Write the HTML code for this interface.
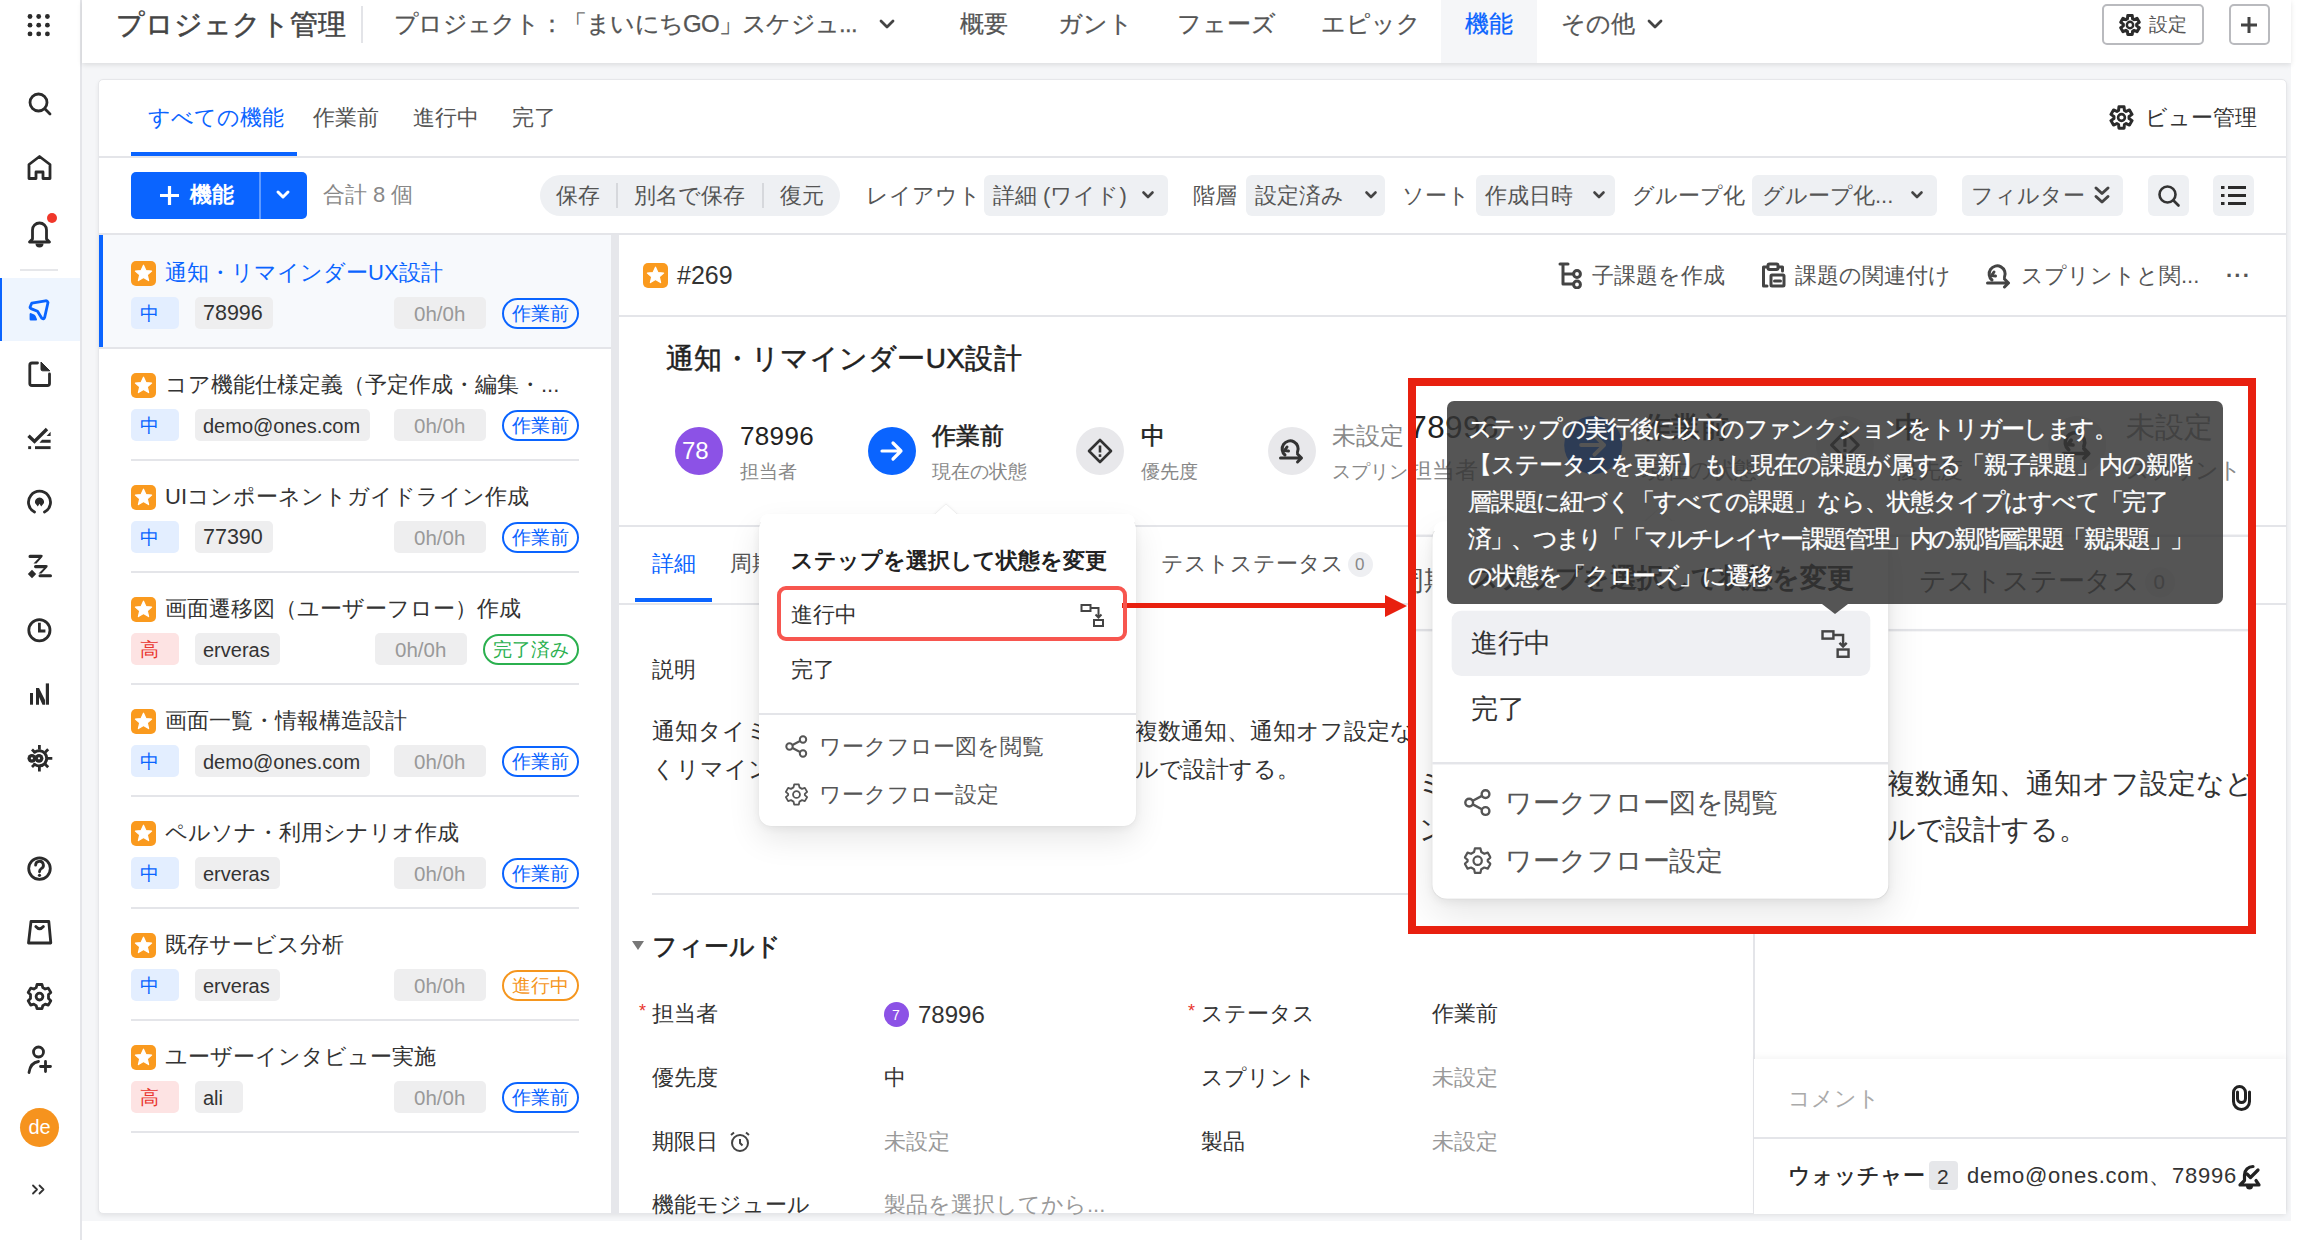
<!DOCTYPE html>
<html lang="ja">
<head>
<meta charset="utf-8">
<style>
*{box-sizing:border-box;margin:0;padding:0}
html,body{width:2304px;height:1240px;overflow:hidden;background:#fff}
body{position:relative;font-family:"Liberation Sans",sans-serif;color:#333;}
.a{position:absolute}
.t{position:absolute;white-space:nowrap;line-height:1}
svg{display:block}
#side{left:0;top:0;width:82px;height:1240px;background:#fff;border-right:2px solid #e4e5e9}
#top{left:82px;top:0;width:2209px;height:63px;background:#fff;box-shadow:0 2px 5px rgba(0,0,0,.10);z-index:2}
#bg{left:82px;top:63px;width:2209px;height:1158px;background:#f5f6f8}
#card{left:98px;top:79px;width:2189px;height:1135px;background:#fff;border:1px solid #e6e7ea;border-radius:5px;box-shadow:0 2px 4px rgba(0,0,0,.07)}
.ico{position:absolute;left:27px;width:25px;height:25px}
.gray{color:#888}
.pill{position:absolute;background:#eef0f3;border-radius:6px;height:41px}
.m{-webkit-text-stroke:0.45px currentColor}
</style>
</head>
<body>
<!-- SIDEBAR -->
<div id="side" class="a"></div>
<div class="a" style="left:0;top:278px;width:80px;height:63px;background:#eef5fe"></div>
<div class="a" style="left:0;top:278px;width:2px;height:63px;background:#0a64ff"></div>
<div class="a" style="left:47px;top:213px;width:10px;height:10px;border-radius:50%;background:#f0372a"></div>
<div class="a" style="left:20px;top:269px;width:38px;height:2px;background:#e6e7ea"></div>
<div class="a" style="left:20px;top:1108px;width:39px;height:39px;border-radius:50%;background:#f6931e;color:#fff;font-size:20px;line-height:39px;text-align:center">de</div>
<svg class="a" style="left:0;top:0" width="82" height="1240" viewBox="0 0 82 1240">
 <g fill="#2b2b2b">
  <circle cx="30" cy="16.5" r="2.4"/><circle cx="38.7" cy="16.5" r="2.4"/><circle cx="47.4" cy="16.5" r="2.4"/>
  <circle cx="30" cy="25.2" r="2.4"/><circle cx="38.7" cy="25.2" r="2.4"/><circle cx="47.4" cy="25.2" r="2.4"/>
  <circle cx="30" cy="33.9" r="2.4"/><circle cx="38.7" cy="33.9" r="2.4"/><circle cx="47.4" cy="33.9" r="2.4"/>
 </g>
 <g fill="none" stroke="#2b2b2b" stroke-width="2.8" stroke-linecap="round" stroke-linejoin="round">
  <!-- search -->
  <circle cx="38.5" cy="102.5" r="8.5"/><path d="M44.8 108.8 L50 114"/>
  <!-- home -->
  <path d="M29 164.5 L39.5 156.5 L50 164.5 V178.5 H43 V172 H36 V178.5 H29 Z"/>
  <!-- bell -->
  <path d="M32.5 239 V230 A7 7 0 0 1 46.5 230 V239 L49.5 242 H29.5 Z"/>
  <!-- doc -->
  <path d="M37.5 363 H32 Q29.8 363 29.8 365.2 V383.5 Q29.8 385.5 32 385.5 H47.5 Q49.5 385.5 49.5 383.5 V374"/>
  <!-- clock -->
  <circle cx="39.4" cy="630.2" r="10.6"/>
  <!-- help -->
  <circle cx="39.5" cy="868.6" r="10.8"/>
  <path d="M35.6 865.2 A3.9 3.9 0 1 1 41 868.8 Q39.5 869.8 39.5 871.8"/>
  <!-- bag -->
  <path d="M31 921.5 H48.8 L50.8 943 H28.5 Z"/>
  <path d="M35.8 926.5 Q39.6 931 43.4 926.5"/>
  <!-- gear -->
  <path d="M37 984.5 H42 L42.8 987.6 L45.2 989 L48.3 988.1 L50.8 992.4 L48.5 994.6 V998.6 L50.8 1000.8 L48.3 1005.1 L45.2 1004.2 L42.8 1005.6 L42 1008.7 H37 L36.2 1005.6 L33.8 1004.2 L30.7 1005.1 L28.2 1000.8 L30.5 998.6 V994.6 L28.2 992.4 L30.7 988.1 L33.8 989 L36.2 987.6 Z"/>
  <circle cx="39.5" cy="996.6" r="3.4"/>
  <!-- user+ -->
  <circle cx="38.5" cy="1052" r="5"/>
  <path d="M29 1072.5 Q30.5 1062.5 38.5 1061.5"/>
  <path d="M45.5 1061.5 V1071.5 M40.5 1066.5 H50.5"/>
  <!-- circle icon -->
  <path d="M34.5 512 A11 11 0 1 1 44.5 512"/>
  <!-- bug -->
  <path d="M34.6 752.2 A7.6 7.6 0 1 1 34.6 764.4" stroke-width="3"/>
  <path d="M39.4 745 V749.5 M39.4 767 V771.5 M47.5 758.3 H52.3 M45.2 752.3 L48.2 749.3 M45.2 764.3 L48.2 767.3 M32 749.5 L35 752.5 M32 767 L35 764" stroke-width="2.8" stroke-linecap="butt"/>
 </g>
 <g fill="#2b2b2b"><circle cx="31.9" cy="758.3" r="4.4"/><circle cx="39" cy="758.3" r="4.4"/></g><g fill="#fff"><circle cx="31.9" cy="758.3" r="1.1"/><circle cx="39" cy="758.3" r="1.1"/></g>
 <!-- bell clapper -->
 <path d="M35.5 243.5 A4 4 0 0 0 43.5 243.5 Z" fill="#2b2b2b"/>
 <!-- doc corner -->
 <path d="M41 362 L49.8 370.8 H42.5 Q41 370.8 41 369.3 Z" fill="#2b2b2b" stroke="#2b2b2b" stroke-width="1" stroke-linejoin="round"/>
 <!-- active icon -->
 <g fill="none" stroke="#0a64ff" stroke-width="2.8" stroke-linejoin="round">
  <path d="M31.8 303.2 L45.5 300.8 Q47.3 300.5 48 302.5 L44.6 317.6 Q43.8 319.8 41.8 318.2 L37.5 311.3 L31 308.6 Q29.6 307.8 30.3 306.4 Z"/>
 </g>
 <path d="M29.6 314.2 Q29.8 312.8 31.2 313.2 L34.2 314.5 Q35.2 315 35.6 316 L37 319.3 Q37.2 320.5 36 320.5 H30.8 Q29.6 320.5 29.6 319.3 Z" fill="#0a64ff"/>
 <!-- checklist -->
 <g fill="none" stroke="#2b2b2b" stroke-width="3.4" stroke-linejoin="miter">
  <path d="M28.5 435.8 L34.5 441.5 L47 429"/>
 </g>
 <g fill="#2b2b2b">
  <path d="M46.6 436 L50.6 431.8 V436 Z"/>
  <path d="M42 439.8 H50.6 V442.8 H39.5 Z"/>
  <rect x="28.2" y="446.2" width="2.9" height="2.9"/>
  <rect x="35" y="446.2" width="15.6" height="2.9"/>
  <!-- circle inner blob -->
  <path d="M35 503 A4.6 4.6 0 1 1 44 503 L41.2 506.5 L39.5 503.8 L37.8 506.5 Z"/>
  <!-- z icon -->
  <path d="M30 554.8 H41 Q43.5 554.8 42.3 557 L36.5 563.5 H33.5 L38.8 558 H30 Q28.5 558 28.5 556.4 Q28.5 554.8 30 554.8 Z"/>
  <path d="M35.5 565 H46 Q48.5 565 47.3 567.2 L41.5 573.5 H38.5 L43.8 568.2 H35.5 Q34 568.2 34 566.6 Q34 565 35.5 565 Z"/>
  <rect x="38.5" y="574.2" width="13.5" height="3" rx="1.5"/>
  <path d="M32 569.8 L36.2 574 L32 578.2 L27.8 574 Z"/>
  <!-- clock hand -->
  <path d="M38 622.8 H40.8 V629.6 H45.4 V632.4 H38 Z"/>
  <!-- chart -->
  <rect x="30" y="693" width="3" height="11.7"/>
  <path d="M36 688 H39 L45 700 V704.7 H42.5 L39 697 V704.7 H36 Z"/>
  <rect x="45.8" y="683.4" width="3.2" height="21.3"/>
  <!-- help dot -->
  <circle cx="39.5" cy="875.3" r="1.6"/>
 </g>
 <!-- >> -->
 <g fill="none" stroke="#333" stroke-width="1.8" stroke-linecap="round" stroke-linejoin="round">
  <path d="M33 1185.5 L37 1189.5 L33 1193.5 M39.5 1185.5 L43.5 1189.5 L39.5 1193.5"/>
 </g>
</svg>
<!-- TOP BAR -->
<div id="top" class="a">
</div>

<div id="bg" class="a"></div>
<div id="card" class="a"></div>


<!-- TOP BAR CONTENT -->
<div class="a" style="left:1441px;top:0;width:96px;height:63px;background:#f5f6f8;z-index:3"></div>
<div class="t" style="left:116px;top:11px;font-size:28px;color:#444;z-index:3;-webkit-text-stroke:0.5px #444">プロジェクト管理</div>
<div class="a" style="left:361px;top:6px;width:2px;height:37px;background:#e3e4e8;z-index:3"></div>
<div class="t" style="left:394px;top:12px;font-size:24px;color:#555;z-index:3;-webkit-text-stroke:0.25px #555;letter-spacing:-0.75px">プロジェクト：「まいにちGO」スケジュ...</div>
<svg class="a" style="left:878px;top:18px;z-index:3" width="18" height="12" viewBox="0 0 18 12" fill="none" stroke="#444" stroke-width="2.8" stroke-linecap="round" stroke-linejoin="round"><path d="M3 3 L9 9 L15 3"/></svg>
<div class="t" style="left:960px;top:12px;font-size:24px;color:#555;z-index:3;-webkit-text-stroke:0.25px #555">概要</div>
<div class="t" style="left:1058px;top:12px;font-size:24px;color:#555;z-index:3;-webkit-text-stroke:0.25px #555">ガント</div>
<div class="t" style="left:1177px;top:12px;font-size:24px;color:#555;z-index:3;-webkit-text-stroke:0.25px #555">フェーズ</div>
<div class="t" style="left:1321px;top:12px;font-size:24px;color:#555;z-index:3;-webkit-text-stroke:0.25px #555">エピック</div>
<div class="t" style="left:1465px;top:12px;font-size:24px;color:#0a64ff;z-index:3;-webkit-text-stroke:0.25px #0a64ff">機能</div>
<div class="t" style="left:1561px;top:12px;font-size:24px;color:#555;z-index:3;-webkit-text-stroke:0.25px #555">その他</div>
<svg class="a" style="left:1646px;top:18px;z-index:3" width="18" height="12" viewBox="0 0 18 12" fill="none" stroke="#444" stroke-width="2.8" stroke-linecap="round" stroke-linejoin="round"><path d="M3 3 L9 9 L15 3"/></svg>
<div class="a" style="left:2102px;top:4px;width:102px;height:41px;border:2px solid #b9babe;border-radius:5px;background:#fff;z-index:3"></div>
<svg class="a" style="left:2119px;top:14px;z-index:3" width="22" height="22" viewBox="0 0 25 25"><g fill="none" stroke="#2b2b2b" stroke-width="3.4" stroke-linejoin="round"><path d="M9.59 5.48 L9.93 1.80 L15.07 1.80 L15.41 5.48 L17.13 6.47 L20.48 4.93 L23.05 9.38 L20.03 11.51 L20.03 13.49 L23.05 15.62 L20.48 20.07 L17.13 18.53 L15.41 19.52 L15.07 23.20 L9.93 23.20 L9.59 19.52 L7.87 18.53 L4.52 20.07 L1.95 15.62 L4.97 13.49 L4.97 11.51 L1.95 9.38 L4.52 4.93 L7.87 6.47 Z"/><circle cx="12.5" cy="12.5" r="3.6" stroke-width="2.8"/></g></svg>
<div class="t" style="left:2149px;top:15px;font-size:19px;color:#555;z-index:3">設定</div>
<div class="a" style="left:2229px;top:4px;width:41px;height:41px;border:2px solid #b9babe;border-radius:5px;background:#fff;z-index:3"></div>
<svg class="a" style="left:2240px;top:16px;z-index:3" width="18" height="18" viewBox="0 0 18 18" stroke="#444" stroke-width="3"><path d="M9 1 V17 M1 9 H17"/></svg>

<!-- CARD: TABS -->
<div class="t" style="left:148px;top:107.0px;font-size:22px;color:#0a64ff;">すべての機能</div>
<div class="t" style="left:313px;top:107.0px;font-size:22px;color:#555;">作業前</div>
<div class="t" style="left:413px;top:107.0px;font-size:22px;color:#555;">進行中</div>
<div class="t" style="left:512px;top:107.0px;font-size:22px;color:#555;">完了</div>
<div class="a" style="left:131px;top:152px;width:166px;height:4px;background:#0a64ff"></div>
<div class="a" style="left:99px;top:156px;width:2187px;height:1.5px;background:#e4e5e9"></div>
<svg class="a" style="left:2109px;top:105px;z-index:3" width="25" height="25" viewBox="0 0 25 25"><g fill="none" stroke="#2b2b2b" stroke-width="3.0" stroke-linejoin="round"><path d="M9.59 5.48 L9.93 1.80 L15.07 1.80 L15.41 5.48 L17.13 6.47 L20.48 4.93 L23.05 9.38 L20.03 11.51 L20.03 13.49 L23.05 15.62 L20.48 20.07 L17.13 18.53 L15.41 19.52 L15.07 23.20 L9.93 23.20 L9.59 19.52 L7.87 18.53 L4.52 20.07 L1.95 15.62 L4.97 13.49 L4.97 11.51 L1.95 9.38 L4.52 4.93 L7.87 6.47 Z"/><circle cx="12.5" cy="12.5" r="3.4" stroke-width="2.6"/></g></svg>
<div class="t" style="left:2145px;top:107.0px;font-size:22px;color:#333;">ビュー管理</div>

<!-- TOOLBAR -->
<div class="a" style="left:131px;top:172px;width:176px;height:47px;background:#0a64ff;border-radius:5px"></div>
<div class="a" style="left:259px;top:172px;width:1.5px;height:47px;background:rgba(255,255,255,.35)"></div>
<svg class="a" style="left:159px;top:185px" width="21" height="21" viewBox="0 0 21 21" stroke="#fff" stroke-width="3.2"><path d="M10.5 1 V20 M1 10.5 H20"/></svg>
<div class="t" style="left:190px;top:184.0px;font-size:22px;color:#fff;font-weight:bold">機能</div>
<svg class="a" style="left:275px;top:189px" width="16" height="12" viewBox="0 0 16 12" fill="none" stroke="#fff" stroke-width="3" stroke-linecap="round" stroke-linejoin="round"><path d="M3 3 L8 8 L13 3"/></svg>
<div class="t" style="left:323px;top:184.0px;font-size:22px;color:#888;">合計 8 個</div>
<div class="a" style="left:540px;top:175px;width:300px;height:41px;background:#eef0f3;border-radius:21px"></div>
<div class="a" style="left:616px;top:183px;width:1.5px;height:25px;background:#d6d8dc"></div>
<div class="a" style="left:762px;top:183px;width:1.5px;height:25px;background:#d6d8dc"></div>
<div class="t" style="left:556px;top:184.5px;font-size:22px;color:#555;">保存</div>
<div class="t" style="left:634px;top:184.5px;font-size:22px;color:#555;">別名で保存</div>
<div class="t" style="left:780px;top:184.5px;font-size:22px;color:#555;">復元</div>
<div class="t" style="left:866px;top:184.5px;font-size:22px;color:#555;">レイアウト</div>
<div class="pill" style="left:984px;top:175px;width:184px"></div>
<div class="t" style="left:993px;top:184.5px;font-size:22px;color:#555;">詳細 (ワイド)</div>
<svg class="a" style="left:1141px;top:190px" width="14" height="10" viewBox="0 0 14 10" fill="none" stroke="#444" stroke-width="2.6" stroke-linecap="round" stroke-linejoin="round"><path d="M2.5 2.5 L7 7 L11.5 2.5"/></svg>
<div class="t" style="left:1193px;top:184.5px;font-size:22px;color:#555;">階層</div>
<div class="pill" style="left:1246px;top:175px;width:139px"></div>
<div class="t" style="left:1255px;top:184.5px;font-size:22px;color:#555;">設定済み</div>
<svg class="a" style="left:1364px;top:190px" width="14" height="10" viewBox="0 0 14 10" fill="none" stroke="#444" stroke-width="2.6" stroke-linecap="round" stroke-linejoin="round"><path d="M2.5 2.5 L7 7 L11.5 2.5"/></svg>
<div class="t" style="left:1402px;top:184.5px;font-size:22px;color:#555;">ソート</div>
<div class="pill" style="left:1476px;top:175px;width:139px"></div>
<div class="t" style="left:1485px;top:184.5px;font-size:22px;color:#555;">作成日時</div>
<svg class="a" style="left:1592px;top:190px" width="14" height="10" viewBox="0 0 14 10" fill="none" stroke="#444" stroke-width="2.6" stroke-linecap="round" stroke-linejoin="round"><path d="M2.5 2.5 L7 7 L11.5 2.5"/></svg>
<div class="t" style="left:1632px;top:184.5px;font-size:22px;color:#555;">グループ化</div>
<div class="pill" style="left:1752px;top:175px;width:185px"></div>
<div class="t" style="left:1762px;top:184.5px;font-size:22px;color:#555;">グループ化...</div>
<svg class="a" style="left:1910px;top:190px" width="14" height="10" viewBox="0 0 14 10" fill="none" stroke="#444" stroke-width="2.6" stroke-linecap="round" stroke-linejoin="round"><path d="M2.5 2.5 L7 7 L11.5 2.5"/></svg>
<div class="pill" style="left:1962px;top:175px;width:161px"></div>
<div class="t" style="left:1971px;top:184.5px;font-size:22px;color:#555;">フィルター</div>
<svg class="a" style="left:2093px;top:185px" width="18" height="21" viewBox="0 0 18 21" fill="none" stroke="#444" stroke-width="3" stroke-linecap="round" stroke-linejoin="round"><path d="M3 3 L9 8.5 L15 3 M3 11.5 L9 17 L15 11.5"/></svg>
<div class="pill" style="left:2148px;top:175px;width:41px"></div>
<svg class="a" style="left:2157px;top:184px" width="24" height="24" viewBox="0 0 24 24" fill="none" stroke="#333" stroke-width="2.6" stroke-linecap="round"><circle cx="10.5" cy="10.5" r="8"/><path d="M16.5 16.5 L21.5 21.5"/></svg>
<div class="pill" style="left:2213px;top:175px;width:41px"></div>
<svg class="a" style="left:2221px;top:185px" width="25" height="21" viewBox="0 0 25 21" fill="#2b2b2b"><rect x="0" y="1" width="3.5" height="3"/><rect x="7" y="1" width="18" height="3"/><rect x="0" y="9" width="3.5" height="3"/><rect x="7" y="9" width="18" height="3"/><rect x="0" y="17" width="3.5" height="3"/><rect x="7" y="17" width="18" height="3"/></svg>
<div class="a" style="left:99px;top:233px;width:2187px;height:1.5px;background:#e4e5e9"></div>

<!-- LIST -->
<div class="a" style="left:611px;top:235px;width:8px;height:979px;background:#e6e7eb"></div>
<div class="a" style="left:99px;top:235px;width:512px;height:113px;background:#f7f9fc"></div>
<div class="a" style="left:99px;top:235px;width:4px;height:113px;background:#0a64ff"></div>
<div class="a" style="left:99px;top:347px;width:512px;height:1.5px;background:#e4e5e9"></div>
<svg class="a" style="left:131px;top:260.5px" width="25" height="25" viewBox="0 0 25 25"><rect x="0" y="0" width="25" height="25" rx="5" fill="#fa9a1e"/><path d="M12.5 4.2 L14.9 9.6 L20.6 10.1 L16.3 13.9 L17.6 19.6 L12.5 16.6 L7.4 19.6 L8.7 13.9 L4.4 10.1 L10.1 9.6 Z" fill="#fff" stroke="#fff" stroke-width="1.2" stroke-linejoin="round"/></svg>
<div class="t" style="left:165px;top:262.0px;font-size:22px;color:#0a64ff;">通知・リマインダーUX設計</div>
<div class="a" style="left:131px;top:297px;width:48px;height:32px;background:#e3eeff;border-radius:5px"></div>
<div class="t" style="left:140px;top:303.5px;font-size:19px;color:#0a64ff;">中</div>
<div class="a" style="left:195px;top:297px;width:78px;height:32px;background:#eeeeef;border-radius:5px"></div>
<div class="t" style="left:203px;top:302.8px;font-size:21.5px;color:#333;">78996</div>
<div class="a" style="left:502px;top:297.5px;width:77px;height:31px;border:2px solid #0a64ff;border-radius:16px"></div>
<div class="t" style="left:512px;top:303.5px;font-size:19px;color:#0a64ff;">作業前</div>
<div class="a" style="left:394px;top:297px;width:92px;height:32px;background:#eeeeef;border-radius:5px"></div>
<div class="t" style="left:414px;top:303.5px;font-size:20.5px;color:#999;">0h/0h</div>
<svg class="a" style="left:131px;top:372.5px" width="25" height="25" viewBox="0 0 25 25"><rect x="0" y="0" width="25" height="25" rx="5" fill="#fa9a1e"/><path d="M12.5 4.2 L14.9 9.6 L20.6 10.1 L16.3 13.9 L17.6 19.6 L12.5 16.6 L7.4 19.6 L8.7 13.9 L4.4 10.1 L10.1 9.6 Z" fill="#fff" stroke="#fff" stroke-width="1.2" stroke-linejoin="round"/></svg>
<div class="t" style="left:165px;top:374.0px;font-size:22px;color:#333;">コア機能仕様定義（予定作成・編集・...</div>
<div class="a" style="left:131px;top:409px;width:48px;height:32px;background:#e3eeff;border-radius:5px"></div>
<div class="t" style="left:140px;top:415.5px;font-size:19px;color:#0a64ff;">中</div>
<div class="a" style="left:195px;top:409px;width:175px;height:32px;background:#eeeeef;border-radius:5px"></div>
<div class="t" style="left:203px;top:415.5px;font-size:20px;color:#333;">demo@ones.com</div>
<div class="a" style="left:502px;top:409.5px;width:77px;height:31px;border:2px solid #0a64ff;border-radius:16px"></div>
<div class="t" style="left:512px;top:415.5px;font-size:19px;color:#0a64ff;">作業前</div>
<div class="a" style="left:394px;top:409px;width:92px;height:32px;background:#eeeeef;border-radius:5px"></div>
<div class="t" style="left:414px;top:415.5px;font-size:20.5px;color:#999;">0h/0h</div>
<div class="a" style="left:131px;top:459px;width:448px;height:1.5px;background:#e4e5e9"></div>
<svg class="a" style="left:131px;top:484.5px" width="25" height="25" viewBox="0 0 25 25"><rect x="0" y="0" width="25" height="25" rx="5" fill="#fa9a1e"/><path d="M12.5 4.2 L14.9 9.6 L20.6 10.1 L16.3 13.9 L17.6 19.6 L12.5 16.6 L7.4 19.6 L8.7 13.9 L4.4 10.1 L10.1 9.6 Z" fill="#fff" stroke="#fff" stroke-width="1.2" stroke-linejoin="round"/></svg>
<div class="t" style="left:165px;top:486.0px;font-size:22px;color:#333;">UIコンポーネントガイドライン作成</div>
<div class="a" style="left:131px;top:521px;width:48px;height:32px;background:#e3eeff;border-radius:5px"></div>
<div class="t" style="left:140px;top:527.5px;font-size:19px;color:#0a64ff;">中</div>
<div class="a" style="left:195px;top:521px;width:78px;height:32px;background:#eeeeef;border-radius:5px"></div>
<div class="t" style="left:203px;top:526.8px;font-size:21.5px;color:#333;">77390</div>
<div class="a" style="left:502px;top:521.5px;width:77px;height:31px;border:2px solid #0a64ff;border-radius:16px"></div>
<div class="t" style="left:512px;top:527.5px;font-size:19px;color:#0a64ff;">作業前</div>
<div class="a" style="left:394px;top:521px;width:92px;height:32px;background:#eeeeef;border-radius:5px"></div>
<div class="t" style="left:414px;top:527.5px;font-size:20.5px;color:#999;">0h/0h</div>
<div class="a" style="left:131px;top:571px;width:448px;height:1.5px;background:#e4e5e9"></div>
<svg class="a" style="left:131px;top:596.5px" width="25" height="25" viewBox="0 0 25 25"><rect x="0" y="0" width="25" height="25" rx="5" fill="#fa9a1e"/><path d="M12.5 4.2 L14.9 9.6 L20.6 10.1 L16.3 13.9 L17.6 19.6 L12.5 16.6 L7.4 19.6 L8.7 13.9 L4.4 10.1 L10.1 9.6 Z" fill="#fff" stroke="#fff" stroke-width="1.2" stroke-linejoin="round"/></svg>
<div class="t" style="left:165px;top:598.0px;font-size:22px;color:#333;">画面遷移図（ユーザーフロー）作成</div>
<div class="a" style="left:131px;top:633px;width:48px;height:32px;background:#fde3e3;border-radius:5px"></div>
<div class="t" style="left:140px;top:639.5px;font-size:19px;color:#e8342c;">高</div>
<div class="a" style="left:195px;top:633px;width:85px;height:32px;background:#eeeeef;border-radius:5px"></div>
<div class="t" style="left:203px;top:639.5px;font-size:20px;color:#333;">erveras</div>
<div class="a" style="left:483px;top:633.5px;width:96px;height:31px;border:2px solid #2bb04f;border-radius:16px"></div>
<div class="t" style="left:493px;top:639.5px;font-size:19px;color:#2bb04f;">完了済み</div>
<div class="a" style="left:375px;top:633px;width:92px;height:32px;background:#eeeeef;border-radius:5px"></div>
<div class="t" style="left:395px;top:639.5px;font-size:20.5px;color:#999;">0h/0h</div>
<div class="a" style="left:131px;top:683px;width:448px;height:1.5px;background:#e4e5e9"></div>
<svg class="a" style="left:131px;top:708.5px" width="25" height="25" viewBox="0 0 25 25"><rect x="0" y="0" width="25" height="25" rx="5" fill="#fa9a1e"/><path d="M12.5 4.2 L14.9 9.6 L20.6 10.1 L16.3 13.9 L17.6 19.6 L12.5 16.6 L7.4 19.6 L8.7 13.9 L4.4 10.1 L10.1 9.6 Z" fill="#fff" stroke="#fff" stroke-width="1.2" stroke-linejoin="round"/></svg>
<div class="t" style="left:165px;top:710.0px;font-size:22px;color:#333;">画面一覧・情報構造設計</div>
<div class="a" style="left:131px;top:745px;width:48px;height:32px;background:#e3eeff;border-radius:5px"></div>
<div class="t" style="left:140px;top:751.5px;font-size:19px;color:#0a64ff;">中</div>
<div class="a" style="left:195px;top:745px;width:175px;height:32px;background:#eeeeef;border-radius:5px"></div>
<div class="t" style="left:203px;top:751.5px;font-size:20px;color:#333;">demo@ones.com</div>
<div class="a" style="left:502px;top:745.5px;width:77px;height:31px;border:2px solid #0a64ff;border-radius:16px"></div>
<div class="t" style="left:512px;top:751.5px;font-size:19px;color:#0a64ff;">作業前</div>
<div class="a" style="left:394px;top:745px;width:92px;height:32px;background:#eeeeef;border-radius:5px"></div>
<div class="t" style="left:414px;top:751.5px;font-size:20.5px;color:#999;">0h/0h</div>
<div class="a" style="left:131px;top:795px;width:448px;height:1.5px;background:#e4e5e9"></div>
<svg class="a" style="left:131px;top:820.5px" width="25" height="25" viewBox="0 0 25 25"><rect x="0" y="0" width="25" height="25" rx="5" fill="#fa9a1e"/><path d="M12.5 4.2 L14.9 9.6 L20.6 10.1 L16.3 13.9 L17.6 19.6 L12.5 16.6 L7.4 19.6 L8.7 13.9 L4.4 10.1 L10.1 9.6 Z" fill="#fff" stroke="#fff" stroke-width="1.2" stroke-linejoin="round"/></svg>
<div class="t" style="left:165px;top:822.0px;font-size:22px;color:#333;">ペルソナ・利用シナリオ作成</div>
<div class="a" style="left:131px;top:857px;width:48px;height:32px;background:#e3eeff;border-radius:5px"></div>
<div class="t" style="left:140px;top:863.5px;font-size:19px;color:#0a64ff;">中</div>
<div class="a" style="left:195px;top:857px;width:85px;height:32px;background:#eeeeef;border-radius:5px"></div>
<div class="t" style="left:203px;top:863.5px;font-size:20px;color:#333;">erveras</div>
<div class="a" style="left:502px;top:857.5px;width:77px;height:31px;border:2px solid #0a64ff;border-radius:16px"></div>
<div class="t" style="left:512px;top:863.5px;font-size:19px;color:#0a64ff;">作業前</div>
<div class="a" style="left:394px;top:857px;width:92px;height:32px;background:#eeeeef;border-radius:5px"></div>
<div class="t" style="left:414px;top:863.5px;font-size:20.5px;color:#999;">0h/0h</div>
<div class="a" style="left:131px;top:907px;width:448px;height:1.5px;background:#e4e5e9"></div>
<svg class="a" style="left:131px;top:932.5px" width="25" height="25" viewBox="0 0 25 25"><rect x="0" y="0" width="25" height="25" rx="5" fill="#fa9a1e"/><path d="M12.5 4.2 L14.9 9.6 L20.6 10.1 L16.3 13.9 L17.6 19.6 L12.5 16.6 L7.4 19.6 L8.7 13.9 L4.4 10.1 L10.1 9.6 Z" fill="#fff" stroke="#fff" stroke-width="1.2" stroke-linejoin="round"/></svg>
<div class="t" style="left:165px;top:934.0px;font-size:22px;color:#333;">既存サービス分析</div>
<div class="a" style="left:131px;top:969px;width:48px;height:32px;background:#e3eeff;border-radius:5px"></div>
<div class="t" style="left:140px;top:975.5px;font-size:19px;color:#0a64ff;">中</div>
<div class="a" style="left:195px;top:969px;width:85px;height:32px;background:#eeeeef;border-radius:5px"></div>
<div class="t" style="left:203px;top:975.5px;font-size:20px;color:#333;">erveras</div>
<div class="a" style="left:502px;top:969.5px;width:77px;height:31px;border:2px solid #f5961e;border-radius:16px"></div>
<div class="t" style="left:512px;top:975.5px;font-size:19px;color:#f5961e;">進行中</div>
<div class="a" style="left:394px;top:969px;width:92px;height:32px;background:#eeeeef;border-radius:5px"></div>
<div class="t" style="left:414px;top:975.5px;font-size:20.5px;color:#999;">0h/0h</div>
<div class="a" style="left:131px;top:1019px;width:448px;height:1.5px;background:#e4e5e9"></div>
<svg class="a" style="left:131px;top:1044.5px" width="25" height="25" viewBox="0 0 25 25"><rect x="0" y="0" width="25" height="25" rx="5" fill="#fa9a1e"/><path d="M12.5 4.2 L14.9 9.6 L20.6 10.1 L16.3 13.9 L17.6 19.6 L12.5 16.6 L7.4 19.6 L8.7 13.9 L4.4 10.1 L10.1 9.6 Z" fill="#fff" stroke="#fff" stroke-width="1.2" stroke-linejoin="round"/></svg>
<div class="t" style="left:165px;top:1046.0px;font-size:22px;color:#333;">ユーザーインタビュー実施</div>
<div class="a" style="left:131px;top:1081px;width:48px;height:32px;background:#fde3e3;border-radius:5px"></div>
<div class="t" style="left:140px;top:1087.5px;font-size:19px;color:#e8342c;">高</div>
<div class="a" style="left:195px;top:1081px;width:48px;height:32px;background:#eeeeef;border-radius:5px"></div>
<div class="t" style="left:203px;top:1087.5px;font-size:20px;color:#333;">ali</div>
<div class="a" style="left:502px;top:1081.5px;width:77px;height:31px;border:2px solid #0a64ff;border-radius:16px"></div>
<div class="t" style="left:512px;top:1087.5px;font-size:19px;color:#0a64ff;">作業前</div>
<div class="a" style="left:394px;top:1081px;width:92px;height:32px;background:#eeeeef;border-radius:5px"></div>
<div class="t" style="left:414px;top:1087.5px;font-size:20.5px;color:#999;">0h/0h</div>
<div class="a" style="left:131px;top:1131px;width:448px;height:1.5px;background:#e4e5e9"></div>

<!-- DETAIL HEADER -->
<svg class="a" style="left:643px;top:262.5px" width="25" height="25" viewBox="0 0 25 25"><rect x="0" y="0" width="25" height="25" rx="5" fill="#fa9a1e"/><path d="M12.5 4.2 L14.9 9.6 L20.6 10.1 L16.3 13.9 L17.6 19.6 L12.5 16.6 L7.4 19.6 L8.7 13.9 L4.4 10.1 L10.1 9.6 Z" fill="#fff" stroke="#fff" stroke-width="1.2" stroke-linejoin="round"/></svg>
<div class="t" style="left:677px;top:263.0px;font-size:25px;color:#333;">#269</div>
<svg class="a" style="left:1558px;top:262px;" width="25" height="27" viewBox="0 0 25 27"><g fill="none" stroke="#444" stroke-width="3" stroke-linecap="round" stroke-linejoin="round"><path d="M2 2 H10 M5 2 V22 H15 M5 12 H15"/><circle cx="19" cy="12" r="3.4"/><circle cx="19" cy="22.5" r="3.4"/></g></svg>
<div class="t" style="left:1592px;top:265.0px;font-size:22px;color:#555;">子課題を作成</div>
<svg class="a" style="left:1760px;top:262px;" width="27" height="27" viewBox="0 0 27 27"><g fill="none" stroke="#444" stroke-width="3" stroke-linejoin="round" stroke-linecap="round"><path d="M7 5 H3.5 V24 H7 M19 5 H22.5 V9"/><rect x="8" y="2" width="10" height="5.5" rx="1.5"/><rect x="11" y="13" width="13" height="11" rx="1"/><path d="M14.5 19 H20.5"/></g></svg>
<div class="t" style="left:1795px;top:265.0px;font-size:22px;color:#555;">課題の関連付け</div>
<svg class="a" style="left:1985px;top:263px;" width="28" height="26" viewBox="0 0 28 26"><g fill="none" stroke="#444" stroke-width="3" stroke-linecap="round" stroke-linejoin="round"><path d="M7 17 A8 8 0 1 1 19.5 14"/><path d="M2.5 20 H23 M19.5 16 L23.5 20 L19.5 24"/><path d="M9 9 L6.5 12.5 L10.5 13"/></g></svg>
<div class="t" style="left:2021px;top:265.0px;font-size:22px;color:#555;">スプリントと関...</div>
<div class="t" style="left:2226px;top:265.0px;font-size:22px;color:#555;letter-spacing:1px;font-weight:bold">···</div>
<div class="a" style="left:619px;top:315px;width:1668px;height:1.5px;background:#e4e5e9"></div>

<!-- DETAIL CORE -->
<div class="t" style="left:666px;top:345.0px;font-size:28px;color:#222;letter-spacing:0.31px;-webkit-text-stroke:0.5px #222">通知・リマインダーUX設計</div>
<div class="a" style="left:675px;top:427px;width:48px;height:48px;border-radius:50%;background:#8c52e6"></div>
<div class="t" style="left:682px;top:439.0px;font-size:24px;color:#fff;">78</div>
<div class="t" style="left:740px;top:423.0px;font-size:26px;color:#222;letter-spacing:0.34px;">78996</div>
<div class="t" style="left:740px;top:461.5px;font-size:19px;color:#888;">担当者</div>
<div class="a" style="left:868px;top:427px;width:48px;height:48px;border-radius:50%;background:#0a64ff"></div>
<svg class="a" style="left:879px;top:439px;" width="26" height="24" viewBox="0 0 26 24"><g fill="none" stroke="#fff" stroke-width="3.2" stroke-linecap="round" stroke-linejoin="round"><path d="M3 12 H22 M14 4 L22 12 L14 20"/></g></svg>
<div class="t" style="left:932px;top:424.0px;font-size:24px;color:#222;-webkit-text-stroke:0.55px #222">作業前</div>
<div class="t" style="left:932px;top:461.5px;font-size:19px;color:#888;">現在の状態</div>
<div class="a" style="left:1076px;top:427px;width:48px;height:48px;border-radius:50%;background:#e8e8eb"></div>
<svg class="a" style="left:1087px;top:438px;" width="26" height="26" viewBox="0 0 26 26"><g fill="none" stroke="#333" stroke-width="2.6" stroke-linejoin="round"><path d="M13 2 L24 13 L13 24 L2 13 Z"/></g><rect x="11.7" y="7.5" width="2.6" height="7" fill="#333"/><rect x="11.7" y="16.3" width="2.6" height="2.6" fill="#333"/></svg>
<div class="t" style="left:1141px;top:424.0px;font-size:24px;color:#222;-webkit-text-stroke:0.55px #222">中</div>
<div class="t" style="left:1141px;top:461.5px;font-size:19px;color:#888;">優先度</div>
<div class="a" style="left:1268px;top:427px;width:48px;height:48px;border-radius:50%;background:#e8e8eb"></div>
<svg class="a" style="left:1278px;top:437px;" width="28" height="28" viewBox="0 0 28 28"><g fill="none" stroke="#333" stroke-width="3" stroke-linecap="round" stroke-linejoin="round"><path d="M7 18 A8 8 0 1 1 19.5 15"/><path d="M2.5 21 H23 M19.5 17 L23.5 21 L19.5 25"/><path d="M9 10 L6.5 13.5 L10.5 14"/></g></svg>
<div class="t" style="left:1332px;top:424.0px;font-size:24px;color:#888;">未設定</div>
<div class="t" style="left:1332px;top:461.5px;font-size:19px;color:#888;">スプリント</div>
<div class="a" style="left:619px;top:525px;width:1668px;height:1.5px;background:#e4e5e9"></div>
<div class="t" style="left:652px;top:553.0px;font-size:22px;color:#0a64ff;">詳細</div>
<div class="t" style="left:730px;top:553.0px;font-size:22px;color:#555;">周期</div>
<div class="t" style="left:1161px;top:553.0px;font-size:22px;color:#555;">テストステータス</div>
<div class="a" style="left:1348px;top:552px;width:25px;height:25px;border-radius:50%;background:#eeeff2"></div>
<div class="t" style="left:1355px;top:556.0px;font-size:17px;color:#888;">0</div>
<div class="a" style="left:635px;top:598px;width:77px;height:4px;background:#0a64ff"></div>
<div class="a" style="left:619px;top:603px;width:1668px;height:1.5px;background:#e4e5e9"></div>
<div class="t" style="left:652px;top:658.5px;font-size:22px;color:#333;">説明</div>
<div class="t" style="left:652px;top:719.5px;font-size:23px;color:#333;">通知タイミング、リ</div>
<div class="t" style="left:652px;top:757.5px;font-size:23px;color:#333;">くリマインダー機能</div>
<div class="t" style="left:1135px;top:719.5px;font-size:23px;color:#333;">複数通知、通知オフ設定など</div>
<div class="t" style="left:1135px;top:757.5px;font-size:23px;color:#333;">ルで設計する。</div>
<div class="a" style="left:759px;top:517px;width:377px;height:309px;background:#fff;border-radius:12px;box-shadow:0 12px 32px rgba(0,0,0,.10),0 2px 8px rgba(0,0,0,.06),0 0 1px rgba(0,0,0,.10)"></div>
<svg class="a" style="left:930px;top:503px;filter:drop-shadow(0 -1px 1px rgba(0,0,0,.04))" width="32" height="16" viewBox="0 0 32 16"><path d="M0 15.5 L16 1 L32 15.5 Z" fill="#fff"/><path d="M0 15.5 L16 1 L32 15.5" fill="none" stroke="rgba(0,0,0,.05)" stroke-width="1"/></svg>
<div class="a" style="left:760px;top:514px;width:375px;height:8px;background:#fff;border-radius:12px 12px 0 0"></div>
<div class="t" style="left:791px;top:549.5px;font-size:22px;color:#222;font-weight:bold">ステップを選択して状態を変更</div>
<div class="t" style="left:791px;top:603.6px;font-size:22px;color:#333;">進行中</div>
<svg class="a" style="left:1080px;top:603px;" width="25" height="25" viewBox="0 0 25 25"><g fill="none" stroke="#444" stroke-width="2"><rect x="1.5" y="2" width="9" height="6"/><rect x="14" y="17" width="9" height="6"/><path d="M10.5 5 H18.5 V14 M15.5 11.5 L18.5 14.5 L21.5 11.5"/></g></svg>
<div class="t" style="left:791px;top:659.0px;font-size:22px;color:#333;">完了</div>
<div class="a" style="left:759px;top:713px;width:377px;height:1.5px;background:#e4e5e9"></div>
<svg class="a" style="left:785px;top:735px;" width="23" height="23" viewBox="0 0 23 23"><g fill="none" stroke="#555" stroke-width="2"><circle cx="4.5" cy="11.5" r="3.2"/><circle cx="18" cy="4.5" r="3.2"/><circle cx="18" cy="18.5" r="3.2"/><path d="M7.5 10 L15 6 M7.5 13 L15 17"/></g></svg>
<div class="t" style="left:819px;top:735.5px;font-size:22px;color:#555;">ワークフロー図を閲覧</div>
<svg class="a" style="left:785px;top:783px;" width="23" height="23" viewBox="0 0 24 24"><g fill="none" stroke="#555" stroke-width="1.9" stroke-linejoin="round"><path d="M9.6 1.5 H14.4 L15.1 4.6 L17.7 6.1 L20.7 5.1 L23.1 9.3 L20.7 11.4 V12.6 L23.1 14.7 L20.7 18.9 L17.7 17.9 L15.1 19.4 L14.4 22.5 H9.6 L8.9 19.4 L6.3 17.9 L3.3 18.9 L0.9 14.7 L3.3 12.6 V11.4 L0.9 9.3 L3.3 5.1 L6.3 6.1 L8.9 4.6 Z"/><circle cx="12" cy="12" r="3.6"/></g></svg>
<div class="t" style="left:819px;top:783.5px;font-size:22px;color:#555;">ワークフロー設定</div>
<div class="a" style="left:652px;top:893px;width:1101px;height:1.5px;background:#e4e5e9"></div>
<div class="a" style="left:1122px;top:603px;width:266px;height:4.5px;background:#e8200f"></div>
<svg class="a" style="left:1385px;top:594.5px;" width="23" height="22" viewBox="0 0 23 22"><path d="M0 0 L22 11 L0 22 Z" fill="#e8200f"/></svg>
<div class="a" style="left:777px;top:586px;width:350px;height:55px;border:4px solid #f7564f;border-radius:9px"></div>

<!-- FIELDS -->
<svg class="a" style="left:632px;top:941px;" width="12" height="10" viewBox="0 0 12 10"><path d="M0 0 H12 L6 9 Z" fill="#777"/></svg>
<div class="t" style="left:652px;top:934.0px;font-size:25px;color:#222;-webkit-text-stroke:0.6px #222">フィールド</div>
<div class="t" style="left:639px;top:1002.0px;font-size:18px;color:#e8342c;">*</div>
<div class="t" style="left:652px;top:1003.0px;font-size:22px;color:#333;">担当者</div>
<div class="a" style="left:884px;top:1001.5px;width:25px;height:25px;border-radius:50%;background:#8c52e6"></div>
<div class="t" style="left:892px;top:1007.5px;font-size:14px;color:#fff;">7</div>
<div class="t" style="left:918px;top:1002.5px;font-size:24px;color:#333;">78996</div>
<div class="t" style="left:1188px;top:1002.0px;font-size:18px;color:#e8342c;">*</div>
<div class="t" style="left:1201px;top:1003.0px;font-size:22px;color:#333;">ステータス</div>
<div class="t" style="left:1432px;top:1003.0px;font-size:22px;color:#333;">作業前</div>
<div class="t" style="left:652px;top:1066.5px;font-size:22px;color:#333;">優先度</div>
<div class="t" style="left:884px;top:1066.5px;font-size:22px;color:#333;">中</div>
<div class="t" style="left:1201px;top:1066.5px;font-size:22px;color:#333;">スプリント</div>
<div class="t" style="left:1432px;top:1066.5px;font-size:22px;color:#999;">未設定</div>
<div class="t" style="left:652px;top:1130.5px;font-size:22px;color:#333;">期限日</div>
<div class="t" style="left:884px;top:1130.5px;font-size:22px;color:#999;">未設定</div>
<div class="t" style="left:1201px;top:1130.5px;font-size:22px;color:#333;">製品</div>
<div class="t" style="left:1432px;top:1130.5px;font-size:22px;color:#999;">未設定</div>
<div class="t" style="left:652px;top:1194.0px;font-size:22px;color:#333;">機能モジュール</div>
<div class="t" style="left:884px;top:1194.0px;font-size:22px;color:#999;">製品を選択してから...</div>
<svg class="a" style="left:728px;top:1130px;" width="24" height="24" viewBox="0 0 24 24"><g fill="none" stroke="#444" stroke-width="2"><circle cx="12" cy="13" r="8"/><path d="M12 9 V13 L14.5 15.5 M3 5 L6 2.5 M21 5 L18 2.5"/></g></svg>

<!-- RIGHT COMMENT PANEL -->
<div class="a" style="left:1753px;top:604px;width:1.5px;height:610px;background:#e4e5e9"></div>
<div class="a" style="left:1754px;top:1059px;width:532px;height:155px;background:#fff;box-shadow:0 -3px 6px rgba(0,0,0,.035)"></div>
<div class="t" style="left:1788px;top:1088.0px;font-size:22px;color:#aaa;">コメント</div>
<svg class="a" style="left:2231px;top:1084px;" width="21" height="28" viewBox="0 0 21 28"><path d="M18.5 8 V17.5 A8 8 0 0 1 2.5 17.5 V8.5 A6 6 0 0 1 14.5 8.5 V14.5 A4 4 0 0 1 6.5 14.5 V8" fill="none" stroke="#222" stroke-width="3" stroke-linecap="round"/></svg>
<div class="a" style="left:1754px;top:1137px;width:532px;height:1.5px;background:#e4e5e9"></div>
<div class="t" style="left:1788px;top:1165.0px;font-size:22px;color:#222;-webkit-text-stroke:0.5px #222">ウォッチャー</div>
<div class="a" style="left:1929px;top:1161px;width:29px;height:29px;background:#e6e7ea;border-radius:4px"></div>
<div class="t" style="left:1937px;top:1165.5px;font-size:21px;color:#333;">2</div>
<div class="t" style="left:1967px;top:1165.0px;font-size:22px;color:#333;letter-spacing:0.74px;">demo@ones.com、78996</div>
<svg class="a" style="left:2237px;top:1163px;" width="26" height="27" viewBox="0 0 26 27"><g fill="none" stroke="#222" stroke-width="3.2" stroke-linecap="round" stroke-linejoin="round"><path d="M16 3.5 A8.5 8.5 0 0 0 7.5 12 V17.5 L3 22 H22 L19 17.5"/><path d="M10 11 L13.5 14.5 L21 7"/></g><path d="M9 23 A3.5 3.5 0 0 0 16 23 Z" fill="#222"/></svg>

<!-- RED BOX + MAGNIFIED VIEW -->
<div class="a" style="left:1416px;top:386px;width:832px;height:540px;overflow:hidden;background:#fff;z-index:5">
<div class="a" style="left:0;top:0;width:2304px;height:1240px;transform-origin:0 0;transform:translate(-902.10px,-486.70px) scale(1.21)">
<div class="t" style="left:666px;top:345.0px;font-size:28px;color:#222;letter-spacing:0.31px;-webkit-text-stroke:0.5px #222">通知・リマインダーUX設計</div>
<div class="a" style="left:675px;top:427px;width:48px;height:48px;border-radius:50%;background:#8c52e6"></div>
<div class="t" style="left:682px;top:439.0px;font-size:24px;color:#fff;">78</div>
<div class="t" style="left:740px;top:423.0px;font-size:26px;color:#222;letter-spacing:0.34px;">78996</div>
<div class="t" style="left:740px;top:461.5px;font-size:19px;color:#888;">担当者</div>
<div class="a" style="left:868px;top:427px;width:48px;height:48px;border-radius:50%;background:#0a64ff"></div>
<svg class="a" style="left:879px;top:439px;" width="26" height="24" viewBox="0 0 26 24"><g fill="none" stroke="#fff" stroke-width="3.2" stroke-linecap="round" stroke-linejoin="round"><path d="M3 12 H22 M14 4 L22 12 L14 20"/></g></svg>
<div class="t" style="left:932px;top:424.0px;font-size:24px;color:#222;-webkit-text-stroke:0.55px #222">作業前</div>
<div class="t" style="left:932px;top:461.5px;font-size:19px;color:#888;">現在の状態</div>
<div class="a" style="left:1076px;top:427px;width:48px;height:48px;border-radius:50%;background:#e8e8eb"></div>
<svg class="a" style="left:1087px;top:438px;" width="26" height="26" viewBox="0 0 26 26"><g fill="none" stroke="#333" stroke-width="2.6" stroke-linejoin="round"><path d="M13 2 L24 13 L13 24 L2 13 Z"/></g><rect x="11.7" y="7.5" width="2.6" height="7" fill="#333"/><rect x="11.7" y="16.3" width="2.6" height="2.6" fill="#333"/></svg>
<div class="t" style="left:1141px;top:424.0px;font-size:24px;color:#222;-webkit-text-stroke:0.55px #222">中</div>
<div class="t" style="left:1141px;top:461.5px;font-size:19px;color:#888;">優先度</div>
<div class="a" style="left:1268px;top:427px;width:48px;height:48px;border-radius:50%;background:#e8e8eb"></div>
<svg class="a" style="left:1278px;top:437px;" width="28" height="28" viewBox="0 0 28 28"><g fill="none" stroke="#333" stroke-width="3" stroke-linecap="round" stroke-linejoin="round"><path d="M7 18 A8 8 0 1 1 19.5 15"/><path d="M2.5 21 H23 M19.5 17 L23.5 21 L19.5 25"/><path d="M9 10 L6.5 13.5 L10.5 14"/></g></svg>
<div class="t" style="left:1332px;top:424.0px;font-size:24px;color:#888;">未設定</div>
<div class="t" style="left:1332px;top:461.5px;font-size:19px;color:#888;">スプリント</div>
<div class="a" style="left:619px;top:525px;width:1668px;height:1.5px;background:#e4e5e9"></div>
<div class="t" style="left:652px;top:553.0px;font-size:22px;color:#0a64ff;">詳細</div>
<div class="t" style="left:730px;top:553.0px;font-size:22px;color:#555;">周期</div>
<div class="t" style="left:1161px;top:553.0px;font-size:22px;color:#555;">テストステータス</div>
<div class="a" style="left:1348px;top:552px;width:25px;height:25px;border-radius:50%;background:#eeeff2"></div>
<div class="t" style="left:1355px;top:556.0px;font-size:17px;color:#888;">0</div>
<div class="a" style="left:635px;top:598px;width:77px;height:4px;background:#0a64ff"></div>
<div class="a" style="left:619px;top:603px;width:1668px;height:1.5px;background:#e4e5e9"></div>
<div class="t" style="left:652px;top:658.5px;font-size:22px;color:#333;">説明</div>
<div class="t" style="left:652px;top:719.5px;font-size:23px;color:#333;">通知タイミング、リ</div>
<div class="t" style="left:652px;top:757.5px;font-size:23px;color:#333;">くリマインダー機能</div>
<div class="t" style="left:1135px;top:719.5px;font-size:23px;color:#333;">複数通知、通知オフ設定など</div>
<div class="t" style="left:1135px;top:757.5px;font-size:23px;color:#333;">ルで設計する。</div>
<div class="a" style="left:759px;top:517px;width:377px;height:309px;background:#fff;border-radius:12px;box-shadow:0 12px 32px rgba(0,0,0,.10),0 2px 8px rgba(0,0,0,.06),0 0 1px rgba(0,0,0,.10)"></div>
<svg class="a" style="left:930px;top:503px;filter:drop-shadow(0 -1px 1px rgba(0,0,0,.04))" width="32" height="16" viewBox="0 0 32 16"><path d="M0 15.5 L16 1 L32 15.5 Z" fill="#fff"/><path d="M0 15.5 L16 1 L32 15.5" fill="none" stroke="rgba(0,0,0,.05)" stroke-width="1"/></svg>
<div class="a" style="left:760px;top:514px;width:375px;height:8px;background:#fff;border-radius:12px 12px 0 0"></div>
<div class="t" style="left:791px;top:549.5px;font-size:22px;color:#222;font-weight:bold">ステップを選択して状態を変更</div>
<div class="a" style="left:775px;top:588px;width:346px;height:54px;background:#eff0f3;border-radius:8px"></div>
<div class="t" style="left:791px;top:603.6px;font-size:22px;color:#333;">進行中</div>
<svg class="a" style="left:1080px;top:603px;" width="25" height="25" viewBox="0 0 25 25"><g fill="none" stroke="#444" stroke-width="2"><rect x="1.5" y="2" width="9" height="6"/><rect x="14" y="17" width="9" height="6"/><path d="M10.5 5 H18.5 V14 M15.5 11.5 L18.5 14.5 L21.5 11.5"/></g></svg>
<div class="t" style="left:791px;top:659.0px;font-size:22px;color:#333;">完了</div>
<div class="a" style="left:759px;top:713px;width:377px;height:1.5px;background:#e4e5e9"></div>
<svg class="a" style="left:785px;top:735px;" width="23" height="23" viewBox="0 0 23 23"><g fill="none" stroke="#555" stroke-width="2"><circle cx="4.5" cy="11.5" r="3.2"/><circle cx="18" cy="4.5" r="3.2"/><circle cx="18" cy="18.5" r="3.2"/><path d="M7.5 10 L15 6 M7.5 13 L15 17"/></g></svg>
<div class="t" style="left:819px;top:735.5px;font-size:22px;color:#555;">ワークフロー図を閲覧</div>
<svg class="a" style="left:785px;top:783px;" width="23" height="23" viewBox="0 0 24 24"><g fill="none" stroke="#555" stroke-width="1.9" stroke-linejoin="round"><path d="M9.6 1.5 H14.4 L15.1 4.6 L17.7 6.1 L20.7 5.1 L23.1 9.3 L20.7 11.4 V12.6 L23.1 14.7 L20.7 18.9 L17.7 17.9 L15.1 19.4 L14.4 22.5 H9.6 L8.9 19.4 L6.3 17.9 L3.3 18.9 L0.9 14.7 L3.3 12.6 V11.4 L0.9 9.3 L3.3 5.1 L6.3 6.1 L8.9 4.6 Z"/><circle cx="12" cy="12" r="3.6"/></g></svg>
<div class="t" style="left:819px;top:783.5px;font-size:22px;color:#555;">ワークフロー設定</div>
</div>
<div class="a" style="left:31px;top:15px;width:776px;height:203px;background:rgba(52,52,52,.84);border-radius:7px"></div>
<svg class="a" style="left:406px;top:218px" width="26" height="10" viewBox="0 0 26 10"><path d="M0 0 H26 L13 10 Z" fill="rgba(52,52,52,.84)"/></svg>
<div class="t" style="left:52px;top:30.5px;font-size:24px;color:#fff;letter-spacing:-1.61px;-webkit-text-stroke:0.3px #fff">ステップの実行後に以下のファンクションをトリガーします。</div>
<div class="t" style="left:52px;top:67.3px;font-size:24px;color:#fff;letter-spacing:-1.03px;-webkit-text-stroke:0.3px #fff">【ステータスを更新】もし現在の課題が属する「親子課題」内の親階</div>
<div class="t" style="left:52px;top:104.1px;font-size:24px;color:#fff;letter-spacing:-1.20px;-webkit-text-stroke:0.3px #fff">層課題に紐づく「すべての課題」なら、状態タイプはすべて「完了</div>
<div class="t" style="left:52px;top:140.9px;font-size:24px;color:#fff;letter-spacing:-2.36px;-webkit-text-stroke:0.3px #fff">済」、つまり「「マルチレイヤー課題管理」内の親階層課題「親課題」」</div>
<div class="t" style="left:52px;top:177.7px;font-size:24px;color:#fff;letter-spacing:-1.08px;-webkit-text-stroke:0.3px #fff">の状態を「クローズ」に遷移</div>
</div>
<div class="a" style="left:1408px;top:378px;width:848px;height:556px;border:8px solid #e8200f;z-index:6"></div>
</body>
</html>
